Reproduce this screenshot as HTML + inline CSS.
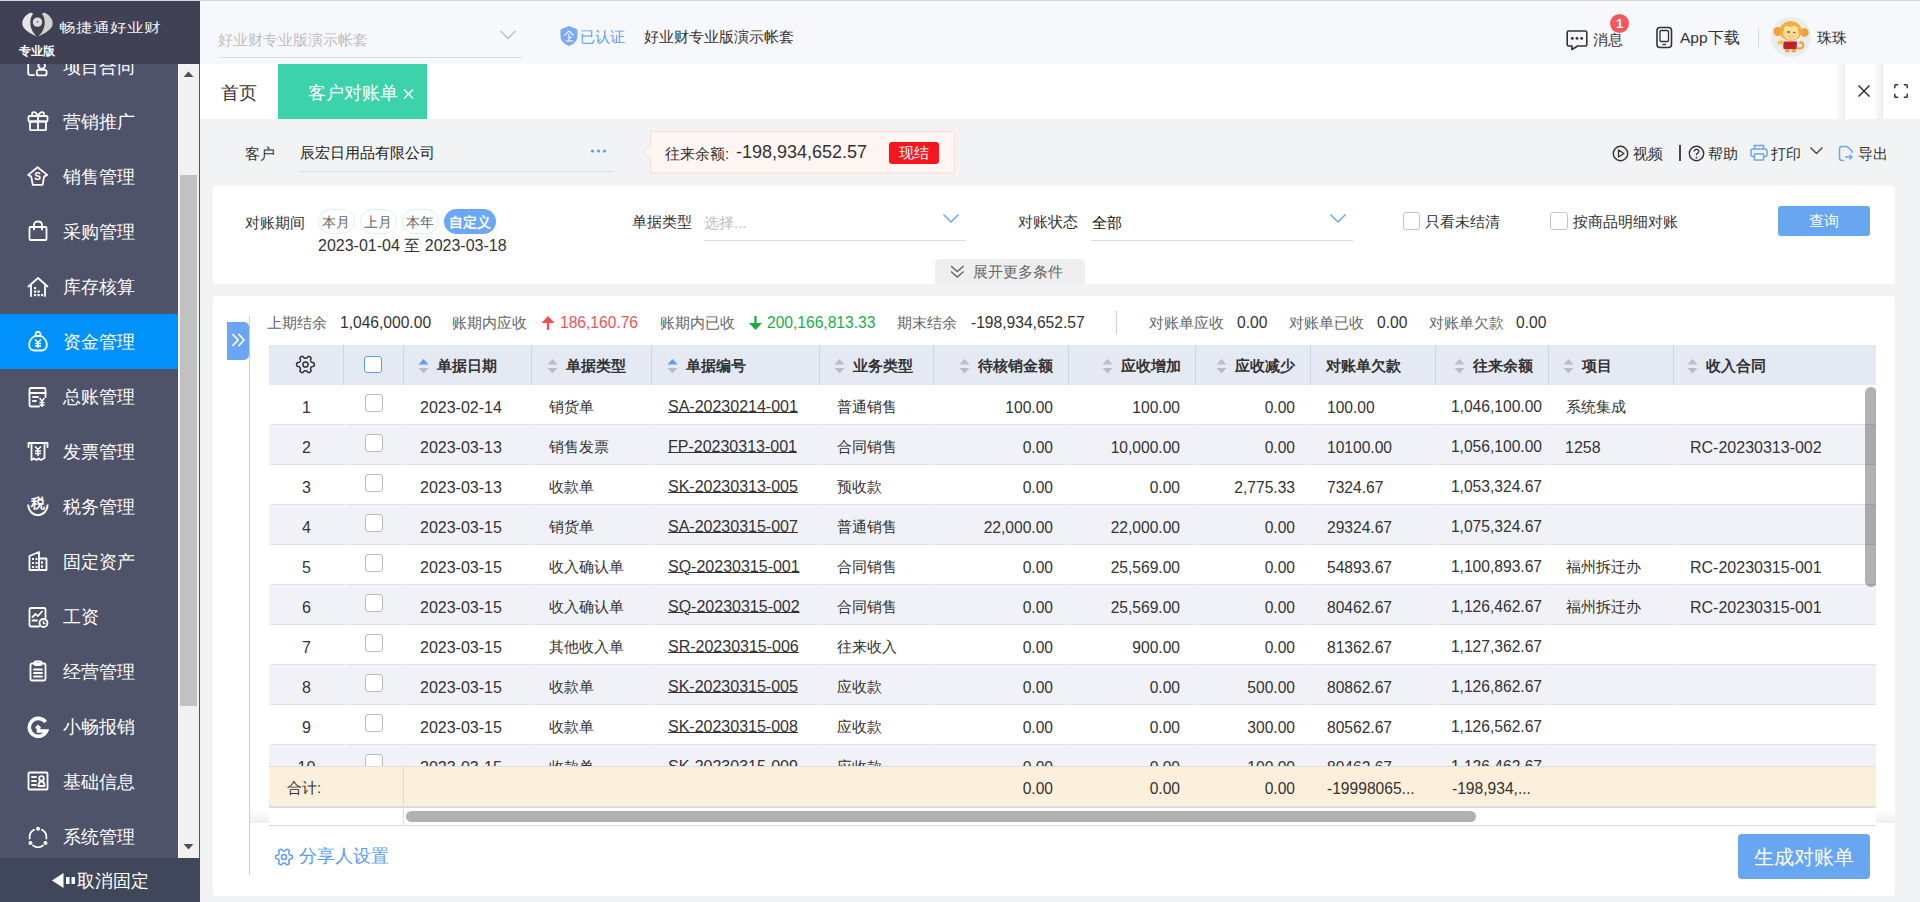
<!DOCTYPE html><html><head><meta charset="utf-8"><style>
*{margin:0;padding:0;box-sizing:border-box}
html,body{width:1920px;height:902px;overflow:hidden;background:#f2f3f5;font-family:"Liberation Sans",sans-serif;}
.t{position:absolute;white-space:nowrap}
.b{position:absolute;display:block}
.u{text-decoration:underline;text-underline-offset:2px}
</style></head><body><div class="b" style="left:200px;top:0px;width:1720px;height:64px;background:#f7f8fc"></div>
<div class="t " style="left:218px;top:30px;font-size:15px;line-height:20px;color:#bfbfbf;">好业财专业版演示帐套</div>
<div class="b" style="left:219px;top:57px;width:303px;height:1px;background:#dedede"></div>
<svg class="b" style="left:499px;top:29px;" width="18" height="12" viewBox="0 0 18 12"><path d="M1.5 2 L9 9.5 L16.5 2" fill="none" stroke="#bdbdbd" stroke-width="1.4"/></svg>
<svg class="b" style="left:559px;top:25px;" width="20" height="22" viewBox="0 0 20 22"><path d="M10 1 L18.5 4.5 V11 C18.5 16 14.5 19.5 10 21 C5.5 19.5 1.5 16 1.5 11 V4.5 Z" fill="#7aaaf6"/><path d="M10 6 L5.5 10.5 M10 6 L14.5 10.5 M10 9 V16 M6.5 16 H14 M10 12.5 H13" stroke="#fff" stroke-width="1.1" fill="none"/></svg>
<div class="t " style="left:580px;top:27px;font-size:15px;line-height:20px;color:#5d9bf4;">已认证</div>
<div class="t " style="left:644px;top:27px;font-size:15px;line-height:20px;color:#333;">好业财专业版演示帐套</div>
<svg class="b" style="left:1565px;top:29px;" width="24" height="23" viewBox="0 0 24 23"><path d="M3.6 2 H20.4 Q21.8 2 21.8 3.4 V15.6 Q21.8 17 20.4 17 H12.8 L6.8 20.5 L7 17 H3.6 Q2.2 17 2.2 15.6 V3.4 Q2.2 2 3.6 2 Z" fill="none" stroke="#333" stroke-width="1.6" stroke-linejoin="round"/><circle cx="7.3" cy="9.4" r="1.45" fill="#333"/><circle cx="12" cy="9.4" r="1.45" fill="#333"/><circle cx="16.7" cy="9.4" r="1.45" fill="#333"/></svg>
<div class="t " style="left:1593px;top:30px;font-size:15px;line-height:20px;color:#333;">消息</div>
<div class="b" style="left:1610px;top:14px;width:19px;height:19px;background:#f5575b;border-radius:50%"></div>
<div class="t " style="left:1610px;top:14px;font-size:13px;line-height:19px;color:#fff;width:19px;text-align:center;font-weight:bold">1</div>
<svg class="b" style="left:1655px;top:26px;" width="19" height="23" viewBox="0 0 19 23"><rect x="2" y="1.5" width="14.5" height="20" rx="3" fill="none" stroke="#333" stroke-width="1.6"/><rect x="5" y="4.5" width="8.5" height="11" rx="1" fill="none" stroke="#333" stroke-width="1.3"/><path d="M7.5 18.5 H11" stroke="#333" stroke-width="1.4"/></svg>
<div class="t " style="left:1680px;top:28px;font-size:15.5px;line-height:20px;color:#333;">App下载</div>
<div class="b" style="left:1758px;top:27px;width:1px;height:20px;background:#dddddd"></div>
<svg class="b" style="left:1771px;top:17px;" width="40" height="40" viewBox="0 0 40 40"><circle cx="20" cy="20" r="20" fill="#ebebeb"/><path d="M26 31 Q33 33 32 27 Q31 24 29 26" fill="none" stroke="#f3a53c" stroke-width="2.2" stroke-linecap="round"/><rect x="14" y="30" width="4.5" height="5.5" rx="2" fill="#f2a23a"/><rect x="20.5" y="30" width="4.5" height="5.5" rx="2" fill="#f2a23a"/><path d="M12 24.5 H26 L25.5 32 H12.5 Z" fill="#c31f2b"/><rect x="6.5" y="23.5" width="6.5" height="4" rx="2" fill="#f5c64a"/><circle cx="7" cy="14.5" r="4.6" fill="#f0a13a"/><circle cx="33.5" cy="15.5" r="4.2" fill="#f0a13a"/><ellipse cx="19.6" cy="14" rx="11" ry="10" fill="#f3ad40"/><ellipse cx="20" cy="16.5" rx="8" ry="6.8" fill="#fbd88e"/><ellipse cx="16.5" cy="11.5" rx="3.5" ry="2.5" fill="#fde3a0"/><ellipse cx="23.5" cy="11.5" rx="3.5" ry="2.5" fill="#fde3a0"/><circle cx="17.5" cy="15" r="1.1" fill="#5a3a6a"/><path d="M22 15.5 H24.5" stroke="#7a4a6a" stroke-width="0.9"/><path d="M18 19.5 Q20.5 22.5 23 19.5 Z" fill="#e08a2a"/><rect x="19.6" y="19.6" width="2" height="1.3" fill="#fff"/></svg>
<div class="t " style="left:1817px;top:28px;font-size:15px;line-height:20px;color:#333;">珠珠</div>
<div class="b" style="left:200px;top:64px;width:1720px;height:55px;background:#fff"></div>
<div class="t " style="left:221px;top:83px;font-size:18px;line-height:20px;color:#333;">首页</div>
<div class="b" style="left:278px;top:64px;width:149px;height:55px;background:#3cd3aa"></div>
<div class="t " style="left:308px;top:83px;font-size:18px;line-height:20px;color:#fff;">客户对账单</div>
<svg class="b" style="left:402px;top:88px;" width="13" height="12" viewBox="0 0 13 12"><path d="M2 1.5 L11 10.5 M11 1.5 L2 10.5" stroke="#fff" stroke-width="1.3"/></svg>
<div class="b" style="left:1835px;top:64px;width:10px;height:55px;background:linear-gradient(to right,rgba(0,0,0,0),rgba(0,0,0,0.07))"></div>
<div class="b" style="left:1845px;top:64px;width:38px;height:55px;background:#fff"></div>
<div class="b" style="left:1873px;top:64px;width:10px;height:55px;background:linear-gradient(to right,rgba(0,0,0,0),rgba(0,0,0,0.07))"></div>
<div class="b" style="left:1883px;top:64px;width:37px;height:55px;background:#fff"></div>
<svg class="b" style="left:1857px;top:84px;" width="14" height="14" viewBox="0 0 14 14"><path d="M1.5 1.5 L12.5 12.5 M12.5 1.5 L1.5 12.5" stroke="#333" stroke-width="1.5"/></svg>
<svg class="b" style="left:1893px;top:83px;" width="16" height="16" viewBox="0 0 16 16"><path d="M1.8 5.2 V2.6 Q1.8 1.8 2.6 1.8 H5.2 M10.8 1.8 H13.4 Q14.2 1.8 14.2 2.6 V5.2 M14.2 10.8 V13.4 Q14.2 14.2 13.4 14.2 H10.8 M5.2 14.2 H2.6 Q1.8 14.2 1.8 13.4 V10.8" fill="none" stroke="#333" stroke-width="1.5"/></svg>
<div class="t " style="left:245px;top:144px;font-size:15px;line-height:20px;color:#333;">客户</div>
<div class="t " style="left:300px;top:143px;font-size:15px;line-height:20px;color:#222;">辰宏日用品有限公司</div>
<svg class="b" style="left:590px;top:148px;" width="17" height="6" viewBox="0 0 17 6"><circle cx="2.5" cy="3" r="1.6" fill="#5d9bf4"/><circle cx="8.5" cy="3" r="1.6" fill="#5d9bf4"/><circle cx="14.5" cy="3" r="1.6" fill="#5d9bf4"/></svg>
<div class="b" style="left:300px;top:171px;width:313px;height:1px;background:#dcdcdc"></div>
<svg class="b" style="left:642px;top:130px;" width="314" height="45" viewBox="0 0 314 45"><path d="M10.5 1.5 H310.5 Q312.5 1.5 312.5 3.5 V41 Q312.5 43 310.5 43 H10.5 Q8.5 43 8.5 41 V28.7 L1.5 22 L8.5 15.3 V3.5 Q8.5 1.5 10.5 1.5 Z" fill="#fff5f2" stroke="#fbdcd2" stroke-width="1"/></svg>
<div class="t " style="left:665px;top:144px;font-size:15px;line-height:20px;color:#333;">往来余额:</div>
<div class="t " style="left:736px;top:142px;font-size:18px;line-height:20px;color:#333;">-198,934,652.57</div>
<div class="b" style="left:889px;top:142px;width:50px;height:22px;background:#f5161f;border-radius:3px"></div>
<div class="t " style="left:889px;top:143px;font-size:15px;line-height:20px;color:#fff;width:50px;text-align:center">现结</div>
<svg class="b" style="left:1612px;top:145px;" width="17" height="17" viewBox="0 0 17 17"><circle cx="8.5" cy="8.5" r="7.2" fill="none" stroke="#333" stroke-width="1.4"/><path d="M6.5 5 L12 8.5 L6.5 12 Z" fill="none" stroke="#333" stroke-width="1.3" stroke-linejoin="round"/></svg>
<div class="t " style="left:1633px;top:144px;font-size:15px;line-height:20px;color:#333;">视频</div>
<div class="b" style="left:1679px;top:145px;width:2px;height:16px;background:#444"></div>
<svg class="b" style="left:1688px;top:145px;" width="17" height="17" viewBox="0 0 17 17"><circle cx="8.5" cy="8.5" r="7.2" fill="none" stroke="#333" stroke-width="1.4"/><path d="M6.2 6.6 Q6.2 4.3 8.5 4.3 Q10.8 4.3 10.8 6.4 Q10.8 7.8 8.5 9 V10.3" fill="none" stroke="#333" stroke-width="1.3"/><circle cx="8.5" cy="12.6" r="0.9" fill="#333"/></svg>
<div class="t " style="left:1708px;top:144px;font-size:15px;line-height:20px;color:#333;">帮助</div>
<svg class="b" style="left:1750px;top:144px;" width="18" height="17" viewBox="0 0 18 17"><path d="M4.5 5 V1.5 H13.5 V5" fill="none" stroke="#6aa7f4" stroke-width="1.5"/><rect x="1" y="5" width="16" height="7.5" rx="2" fill="none" stroke="#6aa7f4" stroke-width="1.5"/><rect x="4.5" y="10" width="9" height="6" fill="#fff" stroke="#6aa7f4" stroke-width="1.5"/></svg>
<div class="t " style="left:1771px;top:144px;font-size:15px;line-height:20px;color:#333;">打印</div>
<svg class="b" style="left:1809px;top:146px;" width="15" height="10" viewBox="0 0 15 10"><path d="M1.5 1.5 L7.5 7.5 L13.5 1.5" fill="none" stroke="#444" stroke-width="1.4"/></svg>
<svg class="b" style="left:1838px;top:145px;" width="16" height="17" viewBox="0 0 16 17"><path d="M9 1.5 H4 Q1.5 1.5 1.5 4 V13 Q1.5 15.5 4 15.5 H6 M9 1.5 L14 6 V8" fill="none" stroke="#6aa7f4" stroke-width="1.5"/><path d="M7 12 H14 M11.5 9.5 L14 12 L11.5 14.5" fill="none" stroke="#6aa7f4" stroke-width="1.4"/></svg>
<div class="t " style="left:1858px;top:144px;font-size:15px;line-height:20px;color:#333;">导出</div>
<div class="b" style="left:213px;top:186px;width:1682px;height:98px;background:#fff;border-radius:3px"></div>
<div class="t " style="left:245px;top:213px;font-size:15px;line-height:20px;color:#333;">对账期间</div>
<div class="b" style="left:318px;top:209px;width:37px;height:25px;border:1px solid #d8f3ea;border-radius:13px"></div>
<div class="t " style="left:317px;top:212px;font-size:14px;line-height:20px;color:#666;width:37px;text-align:center">本月</div>
<div class="b" style="left:360px;top:209px;width:37px;height:25px;border:1px solid #d8f3ea;border-radius:13px"></div>
<div class="t " style="left:359px;top:212px;font-size:14px;line-height:20px;color:#666;width:37px;text-align:center">上月</div>
<div class="b" style="left:402px;top:209px;width:37px;height:25px;border:1px solid #d8f3ea;border-radius:13px"></div>
<div class="t " style="left:401px;top:212px;font-size:14px;line-height:20px;color:#666;width:37px;text-align:center">本年</div>
<div class="b" style="left:444px;top:209px;width:52px;height:25px;background:#6aa7f4;border-radius:13px"></div>
<div class="t " style="left:444px;top:212px;font-size:14px;line-height:20px;color:#fff;width:52px;text-align:center;font-weight:bold">自定义</div>
<div class="t " style="left:318px;top:236px;font-size:16px;line-height:20px;color:#333;">2023-01-04 至 2023-03-18</div>
<div class="t " style="left:632px;top:212px;font-size:15px;line-height:20px;color:#333;">单据类型</div>
<div class="t " style="left:704px;top:213px;font-size:15px;line-height:20px;color:#c0c0c0;">选择...</div>
<svg class="b" style="left:942px;top:213px;" width="18" height="11" viewBox="0 0 18 11"><path d="M1.5 1.5 L9 9 L16.5 1.5" fill="none" stroke="#6aa7f4" stroke-width="1.5"/></svg>
<div class="b" style="left:704px;top:240px;width:262px;height:1px;background:#dcdcdc"></div>
<div class="t " style="left:1018px;top:212px;font-size:15px;line-height:20px;color:#333;">对账状态</div>
<div class="t " style="left:1092px;top:213px;font-size:15px;line-height:20px;color:#111;">全部</div>
<svg class="b" style="left:1329px;top:213px;" width="18" height="11" viewBox="0 0 18 11"><path d="M1.5 1.5 L9 9 L16.5 1.5" fill="none" stroke="#6aa7f4" stroke-width="1.5"/></svg>
<div class="b" style="left:1091px;top:240px;width:262px;height:1px;background:#dcdcdc"></div>
<div class="b" style="left:1403px;top:212px;width:17px;height:18px;border:1px solid #c4c4c4;border-radius:3px;background:#fff"></div>
<div class="t " style="left:1425px;top:212px;font-size:15px;line-height:20px;color:#333;">只看未结清</div>
<div class="b" style="left:1550px;top:212px;width:18px;height:18px;border:1px solid #c4c4c4;border-radius:3px;background:#fff"></div>
<div class="t " style="left:1573px;top:212px;font-size:15px;line-height:20px;color:#333;">按商品明细对账</div>
<div class="b" style="left:1778px;top:206px;width:92px;height:30px;background:#68a6f2;border-radius:3px"></div>
<div class="t " style="left:1778px;top:211px;font-size:15px;line-height:20px;color:#fff;width:92px;text-align:center">查询</div>
<div class="b" style="left:935px;top:259px;width:150px;height:25px;background:#efefef;border-radius:5px 5px 0 0"></div>
<svg class="b" style="left:949px;top:264px;" width="17" height="15" viewBox="0 0 17 15"><path d="M2 2 L8.3 7.5 L14.6 2 M2 7.5 L8.3 13 L14.6 7.5" fill="none" stroke="#666" stroke-width="1.4"/></svg>
<div class="t " style="left:973px;top:262px;font-size:15px;line-height:20px;color:#666;">展开更多条件</div>
<div class="b" style="left:213px;top:296px;width:1682px;height:600px;background:#fff;border-radius:3px"></div>
<div class="b" style="left:249px;top:316px;width:1px;height:559px;background:#cfcfcf"></div>
<div class="b" style="left:227px;top:322px;width:22px;height:38px;background:#6aa6f4;border-radius:0 5px 5px 0"></div>
<svg class="b" style="left:231px;top:333px;" width="15" height="15" viewBox="0 0 15 15"><path d="M1.5 1 L7 7 L1.5 13 M7.5 1 L13 7 L7.5 13" fill="none" stroke="#fff" stroke-width="1.7"/></svg>
<div class="t " style="left:267px;top:313px;font-size:15px;line-height:20px;color:#666;">上期结余</div>
<div class="t " style="left:340px;top:313px;font-size:15.6px;line-height:20px;color:#333;">1,046,000.00</div>
<div class="t " style="left:452px;top:313px;font-size:15px;line-height:20px;color:#666;">账期内应收</div>
<svg class="b" style="left:540px;top:315px;" width="16" height="16" viewBox="0 0 16 16"><path d="M8 1 L14.5 8 H9.1 V15 H6.9 V8 H1.5 Z" fill="#fc4a4e"/></svg>
<div class="t " style="left:560px;top:313px;font-size:15.6px;line-height:20px;color:#f5525a;">186,160.76</div>
<div class="t " style="left:660px;top:313px;font-size:15px;line-height:20px;color:#666;">账期内已收</div>
<svg class="b" style="left:748px;top:315px;" width="15" height="16" viewBox="0 0 15 16"><path d="M7.5 15 L14 8 H8.6 V1 H6.4 V8 H1 Z" fill="#17ac3c"/></svg>
<div class="t " style="left:767px;top:313px;font-size:15.6px;line-height:20px;color:#16b04c;">200,166,813.33</div>
<div class="t " style="left:897px;top:313px;font-size:15px;line-height:20px;color:#666;">期末结余</div>
<div class="t " style="left:971px;top:313px;font-size:15.6px;line-height:20px;color:#333;">-198,934,652.57</div>
<div class="b" style="left:1116px;top:311px;width:1px;height:23px;background:#cfcfcf"></div>
<div class="t " style="left:1149px;top:313px;font-size:15px;line-height:20px;color:#666;">对账单应收</div>
<div class="t " style="left:1237px;top:313px;font-size:15.6px;line-height:20px;color:#333;">0.00</div>
<div class="t " style="left:1289px;top:313px;font-size:15px;line-height:20px;color:#666;">对账单已收</div>
<div class="t " style="left:1377px;top:313px;font-size:15.6px;line-height:20px;color:#333;">0.00</div>
<div class="t " style="left:1429px;top:313px;font-size:15px;line-height:20px;color:#666;">对账单欠款</div>
<div class="t " style="left:1516px;top:313px;font-size:15.6px;line-height:20px;color:#333;">0.00</div>
<div class="b" style="left:269px;top:345px;width:1607px;height:40px;background:#e5e9f4"></div>
<div class="b" style="left:343px;top:345px;width:1px;height:40px;background:#cfd3dc"></div>
<div class="b" style="left:403px;top:345px;width:1px;height:40px;background:#cfd3dc"></div>
<div class="b" style="left:531px;top:345px;width:1px;height:40px;background:#cfd3dc"></div>
<div class="b" style="left:651px;top:345px;width:1px;height:40px;background:#cfd3dc"></div>
<div class="b" style="left:819px;top:345px;width:1px;height:40px;background:#cfd3dc"></div>
<div class="b" style="left:933px;top:345px;width:1px;height:40px;background:#cfd3dc"></div>
<div class="b" style="left:1068px;top:345px;width:1px;height:40px;background:#cfd3dc"></div>
<div class="b" style="left:1195px;top:345px;width:1px;height:40px;background:#cfd3dc"></div>
<div class="b" style="left:1310px;top:345px;width:1px;height:40px;background:#cfd3dc"></div>
<div class="b" style="left:1435px;top:345px;width:1px;height:40px;background:#cfd3dc"></div>
<div class="b" style="left:1548px;top:345px;width:1px;height:40px;background:#cfd3dc"></div>
<div class="b" style="left:1673px;top:345px;width:1px;height:40px;background:#cfd3dc"></div>
<svg class="b" style="left:295px;top:354px;" width="21" height="21" viewBox="0 0 21 21"><path d="M19.45 10.50 L19.41 10.97 L19.28 11.42 L19.06 11.86 L18.71 12.25 L17.84 12.47 L16.97 12.60 L16.60 12.84 L16.32 13.09 L16.10 13.35 L15.91 13.62 L15.77 13.92 L15.66 14.25 L15.58 14.61 L15.56 15.05 L15.87 15.87 L16.12 16.74 L15.95 17.23 L15.69 17.64 L15.36 17.98 L14.98 18.25 L14.55 18.45 L14.09 18.56 L13.60 18.59 L13.09 18.48 L12.47 17.84 L11.91 17.16 L11.52 16.96 L11.17 16.84 L10.83 16.77 L10.50 16.75 L10.17 16.77 L9.83 16.84 L9.48 16.96 L9.09 17.16 L8.53 17.84 L7.91 18.48 L7.40 18.59 L6.91 18.56 L6.45 18.45 L6.03 18.25 L5.64 17.98 L5.31 17.64 L5.05 17.23 L4.88 16.74 L5.13 15.87 L5.44 15.05 L5.42 14.61 L5.34 14.25 L5.23 13.92 L5.09 13.62 L4.90 13.35 L4.68 13.09 L4.40 12.84 L4.03 12.60 L3.16 12.47 L2.29 12.25 L1.94 11.86 L1.72 11.42 L1.59 10.97 L1.55 10.50 L1.59 10.03 L1.72 9.58 L1.94 9.14 L2.29 8.75 L3.16 8.53 L4.03 8.40 L4.40 8.16 L4.68 7.91 L4.90 7.65 L5.09 7.38 L5.23 7.08 L5.34 6.75 L5.42 6.39 L5.44 5.95 L5.13 5.13 L4.88 4.26 L5.05 3.77 L5.31 3.36 L5.64 3.02 L6.02 2.75 L6.45 2.55 L6.91 2.44 L7.40 2.41 L7.91 2.52 L8.53 3.16 L9.09 3.84 L9.48 4.04 L9.83 4.16 L10.17 4.23 L10.50 4.25 L10.83 4.23 L11.17 4.16 L11.52 4.04 L11.91 3.84 L12.47 3.16 L13.09 2.52 L13.60 2.41 L14.09 2.44 L14.55 2.55 L14.98 2.75 L15.36 3.02 L15.69 3.36 L15.95 3.77 L16.12 4.26 L15.87 5.13 L15.56 5.95 L15.58 6.39 L15.66 6.75 L15.77 7.08 L15.91 7.38 L16.10 7.65 L16.32 7.91 L16.60 8.16 L16.97 8.40 L17.84 8.53 L18.71 8.75 L19.06 9.14 L19.28 9.58 L19.41 10.03 Z" fill="none" stroke="#333" stroke-width="1.5"/><circle cx="10.5" cy="10.5" r="2.6" fill="none" stroke="#333" stroke-width="1.5"/></svg>
<div class="b" style="left:364px;top:356px;width:18px;height:17px;border:1.5px solid #5b9cf5;border-radius:3px;background:#fff"></div>
<svg class="b" style="left:417.5px;top:358px;" width="11" height="17" viewBox="0 0 11 17"><path d="M5.5 1 L10.5 6.5 H0.5 Z" fill="#5b9cf5"/><path d="M5.5 15.5 L10.5 10 H0.5 Z" fill="#bdbdbd"/></svg>
<div class="t " style="left:437px;top:356px;font-size:15px;line-height:20px;color:#333;font-weight:bold">单据日期</div>
<svg class="b" style="left:546.5px;top:358px;" width="11" height="17" viewBox="0 0 11 17"><path d="M5.5 1 L10.5 6.5 H0.5 Z" fill="#bdbdbd"/><path d="M5.5 15.5 L10.5 10 H0.5 Z" fill="#bdbdbd"/></svg>
<div class="t " style="left:566px;top:356px;font-size:15px;line-height:20px;color:#333;font-weight:bold">单据类型</div>
<svg class="b" style="left:666.5px;top:358px;" width="11" height="17" viewBox="0 0 11 17"><path d="M5.5 1 L10.5 6.5 H0.5 Z" fill="#5b9cf5"/><path d="M5.5 15.5 L10.5 10 H0.5 Z" fill="#bdbdbd"/></svg>
<div class="t " style="left:686px;top:356px;font-size:15px;line-height:20px;color:#333;font-weight:bold">单据编号</div>
<svg class="b" style="left:833.5px;top:358px;" width="11" height="17" viewBox="0 0 11 17"><path d="M5.5 1 L10.5 6.5 H0.5 Z" fill="#bdbdbd"/><path d="M5.5 15.5 L10.5 10 H0.5 Z" fill="#bdbdbd"/></svg>
<div class="t " style="left:853px;top:356px;font-size:15px;line-height:20px;color:#333;font-weight:bold">业务类型</div>
<svg class="b" style="left:958.5px;top:358px;" width="11" height="17" viewBox="0 0 11 17"><path d="M5.5 1 L10.5 6.5 H0.5 Z" fill="#bdbdbd"/><path d="M5.5 15.5 L10.5 10 H0.5 Z" fill="#bdbdbd"/></svg>
<div class="t " style="left:978px;top:356px;font-size:15px;line-height:20px;color:#333;font-weight:bold">待核销金额</div>
<svg class="b" style="left:1101.5px;top:358px;" width="11" height="17" viewBox="0 0 11 17"><path d="M5.5 1 L10.5 6.5 H0.5 Z" fill="#bdbdbd"/><path d="M5.5 15.5 L10.5 10 H0.5 Z" fill="#bdbdbd"/></svg>
<div class="t " style="left:1121px;top:356px;font-size:15px;line-height:20px;color:#333;font-weight:bold">应收增加</div>
<svg class="b" style="left:1215.5px;top:358px;" width="11" height="17" viewBox="0 0 11 17"><path d="M5.5 1 L10.5 6.5 H0.5 Z" fill="#bdbdbd"/><path d="M5.5 15.5 L10.5 10 H0.5 Z" fill="#bdbdbd"/></svg>
<div class="t " style="left:1235px;top:356px;font-size:15px;line-height:20px;color:#333;font-weight:bold">应收减少</div>
<div class="t " style="left:1326px;top:356px;font-size:15px;line-height:20px;color:#333;font-weight:bold">对账单欠款</div>
<svg class="b" style="left:1453.5px;top:358px;" width="11" height="17" viewBox="0 0 11 17"><path d="M5.5 1 L10.5 6.5 H0.5 Z" fill="#bdbdbd"/><path d="M5.5 15.5 L10.5 10 H0.5 Z" fill="#bdbdbd"/></svg>
<div class="t " style="left:1473px;top:356px;font-size:15px;line-height:20px;color:#333;font-weight:bold">往来余额</div>
<svg class="b" style="left:1562.5px;top:358px;" width="11" height="17" viewBox="0 0 11 17"><path d="M5.5 1 L10.5 6.5 H0.5 Z" fill="#bdbdbd"/><path d="M5.5 15.5 L10.5 10 H0.5 Z" fill="#bdbdbd"/></svg>
<div class="t " style="left:1582px;top:356px;font-size:15px;line-height:20px;color:#333;font-weight:bold">项目</div>
<svg class="b" style="left:1686.5px;top:358px;" width="11" height="17" viewBox="0 0 11 17"><path d="M5.5 1 L10.5 6.5 H0.5 Z" fill="#bdbdbd"/><path d="M5.5 15.5 L10.5 10 H0.5 Z" fill="#bdbdbd"/></svg>
<div class="t " style="left:1706px;top:356px;font-size:15px;line-height:20px;color:#333;font-weight:bold">收入合同</div>
<div class="b" style="left:269px;top:385px;width:1607px;height:381px;overflow:hidden">
<div class="b" style="left:1px;top:39px;width:74px;height:1px;background:#e2e4ea"></div>
<div class="b" style="left:76px;top:39px;width:59px;height:1px;background:#e2e4ea"></div>
<div class="b" style="left:136px;top:39px;width:127px;height:1px;background:#e2e4ea"></div>
<div class="b" style="left:264px;top:39px;width:119px;height:1px;background:#e2e4ea"></div>
<div class="b" style="left:384px;top:39px;width:167px;height:1px;background:#e2e4ea"></div>
<div class="b" style="left:552px;top:39px;width:113px;height:1px;background:#e2e4ea"></div>
<div class="b" style="left:666px;top:39px;width:133px;height:1px;background:#e2e4ea"></div>
<div class="b" style="left:800px;top:39px;width:127px;height:1px;background:#e2e4ea"></div>
<div class="b" style="left:928px;top:39px;width:113px;height:1px;background:#e2e4ea"></div>
<div class="b" style="left:1042px;top:39px;width:125px;height:1px;background:#e2e4ea"></div>
<div class="b" style="left:1168px;top:39px;width:111px;height:1px;background:#e2e4ea"></div>
<div class="b" style="left:1280px;top:39px;width:125px;height:1px;background:#e2e4ea"></div>
<div class="b" style="left:1406px;top:39px;width:201px;height:1px;background:#e2e4ea"></div>
<div class="t" style="left:0px;top:13px;font-size:16px;line-height:20px;color:#333;width:75px;text-align:center">1</div>
<div class="b" style="left:96px;top:9px;width:18px;height:18px;border:1px solid #bcbcbc;border-radius:3px;background:#fff"></div>
<div class="t" style="left:151px;top:13px;font-size:16px;line-height:20px;color:#333;">2023-02-14</div>
<div class="t" style="left:280px;top:11.5px;font-size:15px;line-height:20px;color:#333;">销货单</div>
<div class="t" style="left:399px;top:12px;font-size:16px;line-height:20px;color:#333;text-decoration:underline;text-underline-offset:0px">SA-20230214-001</div>
<div class="t" style="left:568px;top:11.5px;font-size:15px;line-height:20px;color:#333;">普通销售</div>
<div class="t" style="left:484px;top:12.5px;font-size:15.6px;line-height:20px;color:#333;width:300px;text-align:right">100.00</div>
<div class="t" style="left:611px;top:12.5px;font-size:15.6px;line-height:20px;color:#333;width:300px;text-align:right">100.00</div>
<div class="t" style="left:726px;top:12.5px;font-size:15.6px;line-height:20px;color:#333;width:300px;text-align:right">0.00</div>
<div class="t" style="left:1058px;top:12.5px;font-size:15.6px;line-height:20px;color:#333;">100.00</div>
<div class="t" style="left:973px;top:11.5px;font-size:15.6px;line-height:20px;color:#333;width:300px;text-align:right">1,046,100.00</div>
<div class="t" style="left:1297px;top:11.5px;font-size:15px;line-height:20px;color:#333;">系统集成</div>
<div class="b" style="left:0px;top:40px;width:1607px;height:40px;background:#f0f2f8"></div>
<div class="b" style="left:1px;top:79px;width:74px;height:1px;background:#e2e4ea"></div>
<div class="b" style="left:76px;top:79px;width:59px;height:1px;background:#e2e4ea"></div>
<div class="b" style="left:136px;top:79px;width:127px;height:1px;background:#e2e4ea"></div>
<div class="b" style="left:264px;top:79px;width:119px;height:1px;background:#e2e4ea"></div>
<div class="b" style="left:384px;top:79px;width:167px;height:1px;background:#e2e4ea"></div>
<div class="b" style="left:552px;top:79px;width:113px;height:1px;background:#e2e4ea"></div>
<div class="b" style="left:666px;top:79px;width:133px;height:1px;background:#e2e4ea"></div>
<div class="b" style="left:800px;top:79px;width:127px;height:1px;background:#e2e4ea"></div>
<div class="b" style="left:928px;top:79px;width:113px;height:1px;background:#e2e4ea"></div>
<div class="b" style="left:1042px;top:79px;width:125px;height:1px;background:#e2e4ea"></div>
<div class="b" style="left:1168px;top:79px;width:111px;height:1px;background:#e2e4ea"></div>
<div class="b" style="left:1280px;top:79px;width:125px;height:1px;background:#e2e4ea"></div>
<div class="b" style="left:1406px;top:79px;width:201px;height:1px;background:#e2e4ea"></div>
<div class="t" style="left:0px;top:53px;font-size:16px;line-height:20px;color:#333;width:75px;text-align:center">2</div>
<div class="b" style="left:96px;top:49px;width:18px;height:18px;border:1px solid #bcbcbc;border-radius:3px;background:#fff"></div>
<div class="t" style="left:151px;top:53px;font-size:16px;line-height:20px;color:#333;">2023-03-13</div>
<div class="t" style="left:280px;top:51.5px;font-size:15px;line-height:20px;color:#333;">销售发票</div>
<div class="t" style="left:399px;top:52px;font-size:16px;line-height:20px;color:#333;text-decoration:underline;text-underline-offset:0px">FP-20230313-001</div>
<div class="t" style="left:568px;top:51.5px;font-size:15px;line-height:20px;color:#333;">合同销售</div>
<div class="t" style="left:484px;top:52.5px;font-size:15.6px;line-height:20px;color:#333;width:300px;text-align:right">0.00</div>
<div class="t" style="left:611px;top:52.5px;font-size:15.6px;line-height:20px;color:#333;width:300px;text-align:right">10,000.00</div>
<div class="t" style="left:726px;top:52.5px;font-size:15.6px;line-height:20px;color:#333;width:300px;text-align:right">0.00</div>
<div class="t" style="left:1058px;top:52.5px;font-size:15.6px;line-height:20px;color:#333;">10100.00</div>
<div class="t" style="left:973px;top:51.5px;font-size:15.6px;line-height:20px;color:#333;width:300px;text-align:right">1,056,100.00</div>
<div class="t" style="left:1296px;top:53px;font-size:16px;line-height:20px;color:#333;">1258</div>
<div class="t" style="left:1421px;top:53px;font-size:16px;line-height:20px;color:#333;">RC-20230313-002</div>
<div class="b" style="left:1px;top:119px;width:74px;height:1px;background:#e2e4ea"></div>
<div class="b" style="left:76px;top:119px;width:59px;height:1px;background:#e2e4ea"></div>
<div class="b" style="left:136px;top:119px;width:127px;height:1px;background:#e2e4ea"></div>
<div class="b" style="left:264px;top:119px;width:119px;height:1px;background:#e2e4ea"></div>
<div class="b" style="left:384px;top:119px;width:167px;height:1px;background:#e2e4ea"></div>
<div class="b" style="left:552px;top:119px;width:113px;height:1px;background:#e2e4ea"></div>
<div class="b" style="left:666px;top:119px;width:133px;height:1px;background:#e2e4ea"></div>
<div class="b" style="left:800px;top:119px;width:127px;height:1px;background:#e2e4ea"></div>
<div class="b" style="left:928px;top:119px;width:113px;height:1px;background:#e2e4ea"></div>
<div class="b" style="left:1042px;top:119px;width:125px;height:1px;background:#e2e4ea"></div>
<div class="b" style="left:1168px;top:119px;width:111px;height:1px;background:#e2e4ea"></div>
<div class="b" style="left:1280px;top:119px;width:125px;height:1px;background:#e2e4ea"></div>
<div class="b" style="left:1406px;top:119px;width:201px;height:1px;background:#e2e4ea"></div>
<div class="t" style="left:0px;top:93px;font-size:16px;line-height:20px;color:#333;width:75px;text-align:center">3</div>
<div class="b" style="left:96px;top:89px;width:18px;height:18px;border:1px solid #bcbcbc;border-radius:3px;background:#fff"></div>
<div class="t" style="left:151px;top:93px;font-size:16px;line-height:20px;color:#333;">2023-03-13</div>
<div class="t" style="left:280px;top:91.5px;font-size:15px;line-height:20px;color:#333;">收款单</div>
<div class="t" style="left:399px;top:92px;font-size:16px;line-height:20px;color:#333;text-decoration:underline;text-underline-offset:0px">SK-20230313-005</div>
<div class="t" style="left:568px;top:91.5px;font-size:15px;line-height:20px;color:#333;">预收款</div>
<div class="t" style="left:484px;top:92.5px;font-size:15.6px;line-height:20px;color:#333;width:300px;text-align:right">0.00</div>
<div class="t" style="left:611px;top:92.5px;font-size:15.6px;line-height:20px;color:#333;width:300px;text-align:right">0.00</div>
<div class="t" style="left:726px;top:92.5px;font-size:15.6px;line-height:20px;color:#333;width:300px;text-align:right">2,775.33</div>
<div class="t" style="left:1058px;top:92.5px;font-size:15.6px;line-height:20px;color:#333;">7324.67</div>
<div class="t" style="left:973px;top:91.5px;font-size:15.6px;line-height:20px;color:#333;width:300px;text-align:right">1,053,324.67</div>
<div class="b" style="left:0px;top:120px;width:1607px;height:40px;background:#f0f2f8"></div>
<div class="b" style="left:1px;top:159px;width:74px;height:1px;background:#e2e4ea"></div>
<div class="b" style="left:76px;top:159px;width:59px;height:1px;background:#e2e4ea"></div>
<div class="b" style="left:136px;top:159px;width:127px;height:1px;background:#e2e4ea"></div>
<div class="b" style="left:264px;top:159px;width:119px;height:1px;background:#e2e4ea"></div>
<div class="b" style="left:384px;top:159px;width:167px;height:1px;background:#e2e4ea"></div>
<div class="b" style="left:552px;top:159px;width:113px;height:1px;background:#e2e4ea"></div>
<div class="b" style="left:666px;top:159px;width:133px;height:1px;background:#e2e4ea"></div>
<div class="b" style="left:800px;top:159px;width:127px;height:1px;background:#e2e4ea"></div>
<div class="b" style="left:928px;top:159px;width:113px;height:1px;background:#e2e4ea"></div>
<div class="b" style="left:1042px;top:159px;width:125px;height:1px;background:#e2e4ea"></div>
<div class="b" style="left:1168px;top:159px;width:111px;height:1px;background:#e2e4ea"></div>
<div class="b" style="left:1280px;top:159px;width:125px;height:1px;background:#e2e4ea"></div>
<div class="b" style="left:1406px;top:159px;width:201px;height:1px;background:#e2e4ea"></div>
<div class="t" style="left:0px;top:133px;font-size:16px;line-height:20px;color:#333;width:75px;text-align:center">4</div>
<div class="b" style="left:96px;top:129px;width:18px;height:18px;border:1px solid #bcbcbc;border-radius:3px;background:#fff"></div>
<div class="t" style="left:151px;top:133px;font-size:16px;line-height:20px;color:#333;">2023-03-15</div>
<div class="t" style="left:280px;top:131.5px;font-size:15px;line-height:20px;color:#333;">销货单</div>
<div class="t" style="left:399px;top:132px;font-size:16px;line-height:20px;color:#333;text-decoration:underline;text-underline-offset:0px">SA-20230315-007</div>
<div class="t" style="left:568px;top:131.5px;font-size:15px;line-height:20px;color:#333;">普通销售</div>
<div class="t" style="left:484px;top:132.5px;font-size:15.6px;line-height:20px;color:#333;width:300px;text-align:right">22,000.00</div>
<div class="t" style="left:611px;top:132.5px;font-size:15.6px;line-height:20px;color:#333;width:300px;text-align:right">22,000.00</div>
<div class="t" style="left:726px;top:132.5px;font-size:15.6px;line-height:20px;color:#333;width:300px;text-align:right">0.00</div>
<div class="t" style="left:1058px;top:132.5px;font-size:15.6px;line-height:20px;color:#333;">29324.67</div>
<div class="t" style="left:973px;top:131.5px;font-size:15.6px;line-height:20px;color:#333;width:300px;text-align:right">1,075,324.67</div>
<div class="b" style="left:1px;top:199px;width:74px;height:1px;background:#e2e4ea"></div>
<div class="b" style="left:76px;top:199px;width:59px;height:1px;background:#e2e4ea"></div>
<div class="b" style="left:136px;top:199px;width:127px;height:1px;background:#e2e4ea"></div>
<div class="b" style="left:264px;top:199px;width:119px;height:1px;background:#e2e4ea"></div>
<div class="b" style="left:384px;top:199px;width:167px;height:1px;background:#e2e4ea"></div>
<div class="b" style="left:552px;top:199px;width:113px;height:1px;background:#e2e4ea"></div>
<div class="b" style="left:666px;top:199px;width:133px;height:1px;background:#e2e4ea"></div>
<div class="b" style="left:800px;top:199px;width:127px;height:1px;background:#e2e4ea"></div>
<div class="b" style="left:928px;top:199px;width:113px;height:1px;background:#e2e4ea"></div>
<div class="b" style="left:1042px;top:199px;width:125px;height:1px;background:#e2e4ea"></div>
<div class="b" style="left:1168px;top:199px;width:111px;height:1px;background:#e2e4ea"></div>
<div class="b" style="left:1280px;top:199px;width:125px;height:1px;background:#e2e4ea"></div>
<div class="b" style="left:1406px;top:199px;width:201px;height:1px;background:#e2e4ea"></div>
<div class="t" style="left:0px;top:173px;font-size:16px;line-height:20px;color:#333;width:75px;text-align:center">5</div>
<div class="b" style="left:96px;top:169px;width:18px;height:18px;border:1px solid #bcbcbc;border-radius:3px;background:#fff"></div>
<div class="t" style="left:151px;top:173px;font-size:16px;line-height:20px;color:#333;">2023-03-15</div>
<div class="t" style="left:280px;top:171.5px;font-size:15px;line-height:20px;color:#333;">收入确认单</div>
<div class="t" style="left:399px;top:172px;font-size:16px;line-height:20px;color:#333;text-decoration:underline;text-underline-offset:0px">SQ-20230315-001</div>
<div class="t" style="left:568px;top:171.5px;font-size:15px;line-height:20px;color:#333;">合同销售</div>
<div class="t" style="left:484px;top:172.5px;font-size:15.6px;line-height:20px;color:#333;width:300px;text-align:right">0.00</div>
<div class="t" style="left:611px;top:172.5px;font-size:15.6px;line-height:20px;color:#333;width:300px;text-align:right">25,569.00</div>
<div class="t" style="left:726px;top:172.5px;font-size:15.6px;line-height:20px;color:#333;width:300px;text-align:right">0.00</div>
<div class="t" style="left:1058px;top:172.5px;font-size:15.6px;line-height:20px;color:#333;">54893.67</div>
<div class="t" style="left:973px;top:171.5px;font-size:15.6px;line-height:20px;color:#333;width:300px;text-align:right">1,100,893.67</div>
<div class="t" style="left:1297px;top:171.5px;font-size:15px;line-height:20px;color:#333;">福州拆迁办</div>
<div class="t" style="left:1421px;top:173px;font-size:16px;line-height:20px;color:#333;">RC-20230315-001</div>
<div class="b" style="left:0px;top:200px;width:1607px;height:40px;background:#f0f2f8"></div>
<div class="b" style="left:1px;top:239px;width:74px;height:1px;background:#e2e4ea"></div>
<div class="b" style="left:76px;top:239px;width:59px;height:1px;background:#e2e4ea"></div>
<div class="b" style="left:136px;top:239px;width:127px;height:1px;background:#e2e4ea"></div>
<div class="b" style="left:264px;top:239px;width:119px;height:1px;background:#e2e4ea"></div>
<div class="b" style="left:384px;top:239px;width:167px;height:1px;background:#e2e4ea"></div>
<div class="b" style="left:552px;top:239px;width:113px;height:1px;background:#e2e4ea"></div>
<div class="b" style="left:666px;top:239px;width:133px;height:1px;background:#e2e4ea"></div>
<div class="b" style="left:800px;top:239px;width:127px;height:1px;background:#e2e4ea"></div>
<div class="b" style="left:928px;top:239px;width:113px;height:1px;background:#e2e4ea"></div>
<div class="b" style="left:1042px;top:239px;width:125px;height:1px;background:#e2e4ea"></div>
<div class="b" style="left:1168px;top:239px;width:111px;height:1px;background:#e2e4ea"></div>
<div class="b" style="left:1280px;top:239px;width:125px;height:1px;background:#e2e4ea"></div>
<div class="b" style="left:1406px;top:239px;width:201px;height:1px;background:#e2e4ea"></div>
<div class="t" style="left:0px;top:213px;font-size:16px;line-height:20px;color:#333;width:75px;text-align:center">6</div>
<div class="b" style="left:96px;top:209px;width:18px;height:18px;border:1px solid #bcbcbc;border-radius:3px;background:#fff"></div>
<div class="t" style="left:151px;top:213px;font-size:16px;line-height:20px;color:#333;">2023-03-15</div>
<div class="t" style="left:280px;top:211.5px;font-size:15px;line-height:20px;color:#333;">收入确认单</div>
<div class="t" style="left:399px;top:212px;font-size:16px;line-height:20px;color:#333;text-decoration:underline;text-underline-offset:0px">SQ-20230315-002</div>
<div class="t" style="left:568px;top:211.5px;font-size:15px;line-height:20px;color:#333;">合同销售</div>
<div class="t" style="left:484px;top:212.5px;font-size:15.6px;line-height:20px;color:#333;width:300px;text-align:right">0.00</div>
<div class="t" style="left:611px;top:212.5px;font-size:15.6px;line-height:20px;color:#333;width:300px;text-align:right">25,569.00</div>
<div class="t" style="left:726px;top:212.5px;font-size:15.6px;line-height:20px;color:#333;width:300px;text-align:right">0.00</div>
<div class="t" style="left:1058px;top:212.5px;font-size:15.6px;line-height:20px;color:#333;">80462.67</div>
<div class="t" style="left:973px;top:211.5px;font-size:15.6px;line-height:20px;color:#333;width:300px;text-align:right">1,126,462.67</div>
<div class="t" style="left:1297px;top:211.5px;font-size:15px;line-height:20px;color:#333;">福州拆迁办</div>
<div class="t" style="left:1421px;top:213px;font-size:16px;line-height:20px;color:#333;">RC-20230315-001</div>
<div class="b" style="left:1px;top:279px;width:74px;height:1px;background:#e2e4ea"></div>
<div class="b" style="left:76px;top:279px;width:59px;height:1px;background:#e2e4ea"></div>
<div class="b" style="left:136px;top:279px;width:127px;height:1px;background:#e2e4ea"></div>
<div class="b" style="left:264px;top:279px;width:119px;height:1px;background:#e2e4ea"></div>
<div class="b" style="left:384px;top:279px;width:167px;height:1px;background:#e2e4ea"></div>
<div class="b" style="left:552px;top:279px;width:113px;height:1px;background:#e2e4ea"></div>
<div class="b" style="left:666px;top:279px;width:133px;height:1px;background:#e2e4ea"></div>
<div class="b" style="left:800px;top:279px;width:127px;height:1px;background:#e2e4ea"></div>
<div class="b" style="left:928px;top:279px;width:113px;height:1px;background:#e2e4ea"></div>
<div class="b" style="left:1042px;top:279px;width:125px;height:1px;background:#e2e4ea"></div>
<div class="b" style="left:1168px;top:279px;width:111px;height:1px;background:#e2e4ea"></div>
<div class="b" style="left:1280px;top:279px;width:125px;height:1px;background:#e2e4ea"></div>
<div class="b" style="left:1406px;top:279px;width:201px;height:1px;background:#e2e4ea"></div>
<div class="t" style="left:0px;top:253px;font-size:16px;line-height:20px;color:#333;width:75px;text-align:center">7</div>
<div class="b" style="left:96px;top:249px;width:18px;height:18px;border:1px solid #bcbcbc;border-radius:3px;background:#fff"></div>
<div class="t" style="left:151px;top:253px;font-size:16px;line-height:20px;color:#333;">2023-03-15</div>
<div class="t" style="left:280px;top:251.5px;font-size:15px;line-height:20px;color:#333;">其他收入单</div>
<div class="t" style="left:399px;top:252px;font-size:16px;line-height:20px;color:#333;text-decoration:underline;text-underline-offset:0px">SR-20230315-006</div>
<div class="t" style="left:568px;top:251.5px;font-size:15px;line-height:20px;color:#333;">往来收入</div>
<div class="t" style="left:484px;top:252.5px;font-size:15.6px;line-height:20px;color:#333;width:300px;text-align:right">0.00</div>
<div class="t" style="left:611px;top:252.5px;font-size:15.6px;line-height:20px;color:#333;width:300px;text-align:right">900.00</div>
<div class="t" style="left:726px;top:252.5px;font-size:15.6px;line-height:20px;color:#333;width:300px;text-align:right">0.00</div>
<div class="t" style="left:1058px;top:252.5px;font-size:15.6px;line-height:20px;color:#333;">81362.67</div>
<div class="t" style="left:973px;top:251.5px;font-size:15.6px;line-height:20px;color:#333;width:300px;text-align:right">1,127,362.67</div>
<div class="b" style="left:0px;top:280px;width:1607px;height:40px;background:#f0f2f8"></div>
<div class="b" style="left:1px;top:319px;width:74px;height:1px;background:#e2e4ea"></div>
<div class="b" style="left:76px;top:319px;width:59px;height:1px;background:#e2e4ea"></div>
<div class="b" style="left:136px;top:319px;width:127px;height:1px;background:#e2e4ea"></div>
<div class="b" style="left:264px;top:319px;width:119px;height:1px;background:#e2e4ea"></div>
<div class="b" style="left:384px;top:319px;width:167px;height:1px;background:#e2e4ea"></div>
<div class="b" style="left:552px;top:319px;width:113px;height:1px;background:#e2e4ea"></div>
<div class="b" style="left:666px;top:319px;width:133px;height:1px;background:#e2e4ea"></div>
<div class="b" style="left:800px;top:319px;width:127px;height:1px;background:#e2e4ea"></div>
<div class="b" style="left:928px;top:319px;width:113px;height:1px;background:#e2e4ea"></div>
<div class="b" style="left:1042px;top:319px;width:125px;height:1px;background:#e2e4ea"></div>
<div class="b" style="left:1168px;top:319px;width:111px;height:1px;background:#e2e4ea"></div>
<div class="b" style="left:1280px;top:319px;width:125px;height:1px;background:#e2e4ea"></div>
<div class="b" style="left:1406px;top:319px;width:201px;height:1px;background:#e2e4ea"></div>
<div class="t" style="left:0px;top:293px;font-size:16px;line-height:20px;color:#333;width:75px;text-align:center">8</div>
<div class="b" style="left:96px;top:289px;width:18px;height:18px;border:1px solid #bcbcbc;border-radius:3px;background:#fff"></div>
<div class="t" style="left:151px;top:293px;font-size:16px;line-height:20px;color:#333;">2023-03-15</div>
<div class="t" style="left:280px;top:291.5px;font-size:15px;line-height:20px;color:#333;">收款单</div>
<div class="t" style="left:399px;top:292px;font-size:16px;line-height:20px;color:#333;text-decoration:underline;text-underline-offset:0px">SK-20230315-005</div>
<div class="t" style="left:568px;top:291.5px;font-size:15px;line-height:20px;color:#333;">应收款</div>
<div class="t" style="left:484px;top:292.5px;font-size:15.6px;line-height:20px;color:#333;width:300px;text-align:right">0.00</div>
<div class="t" style="left:611px;top:292.5px;font-size:15.6px;line-height:20px;color:#333;width:300px;text-align:right">0.00</div>
<div class="t" style="left:726px;top:292.5px;font-size:15.6px;line-height:20px;color:#333;width:300px;text-align:right">500.00</div>
<div class="t" style="left:1058px;top:292.5px;font-size:15.6px;line-height:20px;color:#333;">80862.67</div>
<div class="t" style="left:973px;top:291.5px;font-size:15.6px;line-height:20px;color:#333;width:300px;text-align:right">1,126,862.67</div>
<div class="b" style="left:1px;top:359px;width:74px;height:1px;background:#e2e4ea"></div>
<div class="b" style="left:76px;top:359px;width:59px;height:1px;background:#e2e4ea"></div>
<div class="b" style="left:136px;top:359px;width:127px;height:1px;background:#e2e4ea"></div>
<div class="b" style="left:264px;top:359px;width:119px;height:1px;background:#e2e4ea"></div>
<div class="b" style="left:384px;top:359px;width:167px;height:1px;background:#e2e4ea"></div>
<div class="b" style="left:552px;top:359px;width:113px;height:1px;background:#e2e4ea"></div>
<div class="b" style="left:666px;top:359px;width:133px;height:1px;background:#e2e4ea"></div>
<div class="b" style="left:800px;top:359px;width:127px;height:1px;background:#e2e4ea"></div>
<div class="b" style="left:928px;top:359px;width:113px;height:1px;background:#e2e4ea"></div>
<div class="b" style="left:1042px;top:359px;width:125px;height:1px;background:#e2e4ea"></div>
<div class="b" style="left:1168px;top:359px;width:111px;height:1px;background:#e2e4ea"></div>
<div class="b" style="left:1280px;top:359px;width:125px;height:1px;background:#e2e4ea"></div>
<div class="b" style="left:1406px;top:359px;width:201px;height:1px;background:#e2e4ea"></div>
<div class="t" style="left:0px;top:333px;font-size:16px;line-height:20px;color:#333;width:75px;text-align:center">9</div>
<div class="b" style="left:96px;top:329px;width:18px;height:18px;border:1px solid #bcbcbc;border-radius:3px;background:#fff"></div>
<div class="t" style="left:151px;top:333px;font-size:16px;line-height:20px;color:#333;">2023-03-15</div>
<div class="t" style="left:280px;top:331.5px;font-size:15px;line-height:20px;color:#333;">收款单</div>
<div class="t" style="left:399px;top:332px;font-size:16px;line-height:20px;color:#333;text-decoration:underline;text-underline-offset:0px">SK-20230315-008</div>
<div class="t" style="left:568px;top:331.5px;font-size:15px;line-height:20px;color:#333;">应收款</div>
<div class="t" style="left:484px;top:332.5px;font-size:15.6px;line-height:20px;color:#333;width:300px;text-align:right">0.00</div>
<div class="t" style="left:611px;top:332.5px;font-size:15.6px;line-height:20px;color:#333;width:300px;text-align:right">0.00</div>
<div class="t" style="left:726px;top:332.5px;font-size:15.6px;line-height:20px;color:#333;width:300px;text-align:right">300.00</div>
<div class="t" style="left:1058px;top:332.5px;font-size:15.6px;line-height:20px;color:#333;">80562.67</div>
<div class="t" style="left:973px;top:331.5px;font-size:15.6px;line-height:20px;color:#333;width:300px;text-align:right">1,126,562.67</div>
<div class="b" style="left:0px;top:360px;width:1607px;height:40px;background:#f0f2f8"></div>
<div class="b" style="left:1px;top:399px;width:74px;height:1px;background:#e2e4ea"></div>
<div class="b" style="left:76px;top:399px;width:59px;height:1px;background:#e2e4ea"></div>
<div class="b" style="left:136px;top:399px;width:127px;height:1px;background:#e2e4ea"></div>
<div class="b" style="left:264px;top:399px;width:119px;height:1px;background:#e2e4ea"></div>
<div class="b" style="left:384px;top:399px;width:167px;height:1px;background:#e2e4ea"></div>
<div class="b" style="left:552px;top:399px;width:113px;height:1px;background:#e2e4ea"></div>
<div class="b" style="left:666px;top:399px;width:133px;height:1px;background:#e2e4ea"></div>
<div class="b" style="left:800px;top:399px;width:127px;height:1px;background:#e2e4ea"></div>
<div class="b" style="left:928px;top:399px;width:113px;height:1px;background:#e2e4ea"></div>
<div class="b" style="left:1042px;top:399px;width:125px;height:1px;background:#e2e4ea"></div>
<div class="b" style="left:1168px;top:399px;width:111px;height:1px;background:#e2e4ea"></div>
<div class="b" style="left:1280px;top:399px;width:125px;height:1px;background:#e2e4ea"></div>
<div class="b" style="left:1406px;top:399px;width:201px;height:1px;background:#e2e4ea"></div>
<div class="t" style="left:0px;top:373px;font-size:16px;line-height:20px;color:#333;width:75px;text-align:center">10</div>
<div class="b" style="left:96px;top:369px;width:18px;height:18px;border:1px solid #bcbcbc;border-radius:3px;background:#fff"></div>
<div class="t" style="left:151px;top:373px;font-size:16px;line-height:20px;color:#333;">2023-03-15</div>
<div class="t" style="left:280px;top:371.5px;font-size:15px;line-height:20px;color:#333;">收款单</div>
<div class="t" style="left:399px;top:372px;font-size:16px;line-height:20px;color:#333;text-decoration:underline;text-underline-offset:0px">SK-20230315-009</div>
<div class="t" style="left:568px;top:371.5px;font-size:15px;line-height:20px;color:#333;">应收款</div>
<div class="t" style="left:484px;top:372.5px;font-size:15.6px;line-height:20px;color:#333;width:300px;text-align:right">0.00</div>
<div class="t" style="left:611px;top:372.5px;font-size:15.6px;line-height:20px;color:#333;width:300px;text-align:right">0.00</div>
<div class="t" style="left:726px;top:372.5px;font-size:15.6px;line-height:20px;color:#333;width:300px;text-align:right">100.00</div>
<div class="t" style="left:1058px;top:372.5px;font-size:15.6px;line-height:20px;color:#333;">80462.67</div>
<div class="t" style="left:973px;top:371.5px;font-size:15.6px;line-height:20px;color:#333;width:300px;text-align:right">1,126,462.67</div>
<div class="b" style="left:1596px;top:2px;width:12px;height:200px;background:rgba(0,0,0,0.3);border-radius:6px"></div>
</div>
<div class="b" style="left:269px;top:766px;width:1607px;height:40px;background:#fcefdb"></div>
<div class="b" style="left:403px;top:766px;width:1px;height:40px;background:#e0dcd4"></div>
<div class="b" style="left:269px;top:806px;width:1607px;height:2px;background:#dcdcdc"></div>
<div class="b" style="left:269px;top:766px;width:1607px;height:1px;background:#dedede"></div>
<div class="t " style="left:287px;top:778px;font-size:15px;line-height:20px;color:#333;">合计:</div>
<div class="t " style="left:753px;top:779px;font-size:15.6px;line-height:20px;color:#333;width:300px;text-align:right">0.00</div>
<div class="t " style="left:880px;top:779px;font-size:15.6px;line-height:20px;color:#333;width:300px;text-align:right">0.00</div>
<div class="t " style="left:995px;top:779px;font-size:15.6px;line-height:20px;color:#333;width:300px;text-align:right">0.00</div>
<div class="t " style="left:1327px;top:779px;font-size:15.6px;line-height:20px;color:#333;">-19998065...</div>
<div class="t " style="left:1452px;top:779px;font-size:15.6px;line-height:20px;color:#333;">-198,934,...</div>
<div class="b" style="left:269px;top:808px;width:1607px;height:17px;background:#fff"></div>
<div class="b" style="left:403px;top:808px;width:1px;height:17px;background:#e0e0e0"></div>
<div class="b" style="left:406px;top:811px;width:1070px;height:11px;background:#b1b1b1;border-radius:6px"></div>
<div class="b" style="left:269px;top:825px;width:1607px;height:1px;background:#dddddd"></div>
<div class="b" style="left:250px;top:811px;width:19px;height:12px;background:linear-gradient(rgba(0,0,0,0),rgba(0,0,0,0.07))"></div>
<div class="b" style="left:1876px;top:811px;width:19px;height:12px;background:linear-gradient(rgba(0,0,0,0),rgba(0,0,0,0.07))"></div>
<svg class="b" style="left:274px;top:847px;" width="20" height="20" viewBox="0 0 20 20"><path d="M18.50 10.00 L18.46 10.44 L18.34 10.88 L18.12 11.29 L17.79 11.66 L16.95 11.86 L16.12 11.99 L15.77 12.21 L15.50 12.45 L15.28 12.69 L15.11 12.95 L14.97 13.23 L14.87 13.54 L14.80 13.89 L14.78 14.30 L15.09 15.09 L15.33 15.92 L15.18 16.39 L14.93 16.78 L14.61 17.10 L14.25 17.36 L13.85 17.55 L13.41 17.66 L12.95 17.68 L12.46 17.58 L11.86 16.95 L11.34 16.29 L10.97 16.10 L10.63 15.99 L10.31 15.92 L10.00 15.90 L9.69 15.92 L9.37 15.99 L9.03 16.10 L8.66 16.29 L8.14 16.95 L7.54 17.58 L7.05 17.68 L6.59 17.66 L6.15 17.55 L5.75 17.36 L5.39 17.10 L5.07 16.78 L4.82 16.39 L4.67 15.92 L4.91 15.09 L5.22 14.30 L5.20 13.89 L5.13 13.54 L5.03 13.23 L4.89 12.95 L4.72 12.69 L4.50 12.45 L4.23 12.21 L3.88 11.99 L3.05 11.86 L2.21 11.66 L1.88 11.29 L1.66 10.88 L1.54 10.44 L1.50 10.00 L1.54 9.56 L1.66 9.12 L1.88 8.71 L2.21 8.34 L3.05 8.14 L3.88 8.01 L4.23 7.79 L4.50 7.55 L4.72 7.31 L4.89 7.05 L5.03 6.77 L5.13 6.46 L5.20 6.11 L5.22 5.70 L4.91 4.91 L4.67 4.08 L4.82 3.61 L5.07 3.22 L5.39 2.90 L5.75 2.64 L6.15 2.45 L6.59 2.34 L7.05 2.32 L7.54 2.42 L8.14 3.05 L8.66 3.71 L9.03 3.90 L9.37 4.01 L9.69 4.08 L10.00 4.10 L10.31 4.08 L10.63 4.01 L10.97 3.90 L11.34 3.71 L11.86 3.05 L12.46 2.42 L12.95 2.32 L13.41 2.34 L13.85 2.45 L14.25 2.64 L14.61 2.90 L14.93 3.22 L15.18 3.61 L15.33 4.08 L15.09 4.91 L14.78 5.70 L14.80 6.11 L14.87 6.46 L14.97 6.77 L15.11 7.05 L15.28 7.31 L15.50 7.55 L15.77 7.79 L16.12 8.01 L16.95 8.14 L17.79 8.34 L18.12 8.71 L18.34 9.12 L18.46 9.56 Z" fill="none" stroke="#5b9cf5" stroke-width="1.5"/><circle cx="10" cy="10" r="2.5" fill="none" stroke="#5b9cf5" stroke-width="1.5"/></svg>
<div class="t " style="left:299px;top:846px;font-size:17.5px;line-height:20px;color:#5b9cf5;">分享人设置</div>
<div class="b" style="left:1738px;top:834px;width:132px;height:45px;background:#68a6f2;border-radius:4px"></div>
<div class="t " style="left:1738px;top:846px;font-size:20px;line-height:22px;color:#fff;width:132px;text-align:center">生成对账单</div>
<div class="b" style="left:0px;top:64px;width:200px;height:838px;background:#4f5369"></div>
<div class="b" style="left:0px;top:314px;width:178px;height:55px;background:#0191fa"></div>
<svg class="b" style="left:27px;top:56px;" width="22" height="22" viewBox="0 0 22 22"><path d="M7 4 H3.5 Q1.2 4 1.2 6.5 V16.8 Q1.2 19.2 3.5 19.2 H7" stroke="#fff" stroke-width="1.8" fill="none" stroke-linejoin="round" stroke-linecap="round"/><circle cx="14.7" cy="9.5" r="3.3" stroke="#fff" stroke-width="1.8" fill="none" stroke-linejoin="round" stroke-linecap="round"/><rect x="9.8" y="13.8" width="9.8" height="5.6" rx="2" stroke="#fff" stroke-width="1.8" fill="none" stroke-linejoin="round" stroke-linecap="round"/></svg>
<div class="t " style="left:63px;top:57px;font-size:17.5px;line-height:20px;color:#fff;font-weight:500">项目合同</div>
<svg class="b" style="left:27px;top:110px;" width="22" height="22" viewBox="0 0 22 22"><rect x="1.5" y="6" width="19" height="5.5" rx="1" stroke="#fff" stroke-width="1.8" fill="none" stroke-linejoin="round" stroke-linecap="round"/><rect x="3" y="11.5" width="16" height="8.7" rx="1" stroke="#fff" stroke-width="1.8" fill="none" stroke-linejoin="round" stroke-linecap="round"/><path d="M11 6 V20.2 M11 6 C8.5 0.5 3.5 1 5.5 5.8 M11 6 C13.5 0.5 18.5 1 16.5 5.8" stroke="#fff" stroke-width="1.8" fill="none" stroke-linejoin="round" stroke-linecap="round"/></svg>
<div class="t " style="left:63px;top:112px;font-size:17.5px;line-height:20px;color:#fff;font-weight:500">营销推广</div>
<svg class="b" style="left:27px;top:166px;" width="22" height="22" viewBox="0 0 22 22"><path d="M10.6 1.2 L1.2 8.9 L4.2 10.6 L5.8 18.9 H15.6 L17.1 10.6 L20.2 8.9 Z" stroke="#fff" stroke-width="1.8" fill="none" stroke-linejoin="round" stroke-linecap="round"/><text x="10.6" y="13.6" font-size="10" font-weight="bold" fill="#fff" text-anchor="middle" font-family="Liberation Sans">S</text></svg>
<div class="t " style="left:63px;top:167px;font-size:17.5px;line-height:20px;color:#fff;font-weight:500">销售管理</div>
<svg class="b" style="left:27px;top:220px;" width="22" height="22" viewBox="0 0 22 22"><rect x="2.5" y="7" width="17" height="13" rx="1" stroke="#fff" stroke-width="1.8" fill="none" stroke-linejoin="round" stroke-linecap="round"/><path d="M7 9.5 V5 Q7 1.5 11 1.5 Q15 1.5 15 5 V9.5" stroke="#fff" stroke-width="1.8" fill="none" stroke-linejoin="round" stroke-linecap="round"/></svg>
<div class="t " style="left:63px;top:222px;font-size:17.5px;line-height:20px;color:#fff;font-weight:500">采购管理</div>
<svg class="b" style="left:27px;top:276px;" width="22" height="22" viewBox="0 0 22 22"><path d="M1.5 10.5 L11 2 L20.5 10.5 M4 8.5 V20" stroke="#fff" stroke-width="1.8" fill="none" stroke-linejoin="round" stroke-linecap="round"/><path d="M18 8.5 V20" stroke="#fff" stroke-width="1.8" fill="none" stroke-linejoin="round" stroke-linecap="round"/><rect x="7" y="11" width="2.2" height="2.2" fill="#fff"/><rect x="7" y="14.5" width="2.2" height="2.2" fill="#fff"/><rect x="10.5" y="14.5" width="2.2" height="2.2" fill="#fff"/><rect x="7" y="18" width="2.2" height="2.2" fill="#fff"/><rect x="10.5" y="18" width="2.2" height="2.2" fill="#fff"/><rect x="14" y="18" width="2.2" height="2.2" fill="#fff"/></svg>
<div class="t " style="left:63px;top:277px;font-size:17.5px;line-height:20px;color:#fff;font-weight:500">库存核算</div>
<svg class="b" style="left:27px;top:330px;" width="22" height="22" viewBox="0 0 22 22"><path d="M8 6 H14 L12.5 2 H9.5 Z M8 6 C3 8 1.5 13 2.5 17 Q3.5 20.5 8 20.5 H14 Q18.5 20.5 19.5 17 C20.5 13 19 8 14 6" stroke="#fff" stroke-width="1.8" fill="none" stroke-linejoin="round" stroke-linecap="round"/><path d="M8 9.5 L11 12.5 L14 9.5 M11 12.5 V18 M8 13.5 H14 M8 16 H14" stroke="#fff" stroke-width="1.5" fill="none"/></svg>
<div class="t " style="left:63px;top:332px;font-size:17.5px;line-height:20px;color:#fff;font-weight:500">资金管理</div>
<svg class="b" style="left:27px;top:386px;" width="22" height="22" viewBox="0 0 22 22"><path d="M12 20.5 H4 Q2.5 20.5 2.5 19 V3.5 Q2.5 2 4 2 H17 Q18.5 2 18.5 3.5 V11" stroke="#fff" stroke-width="1.8" fill="none" stroke-linejoin="round" stroke-linecap="round"/><path d="M2.5 7 H18.5 M6 11 H11 M6 15 H9" stroke="#fff" stroke-width="1.8" fill="none" stroke-linejoin="round" stroke-linecap="round"/><path d="M12.5 12 L15 15 L17.5 12 M15 15 V21 M12.5 16.5 H17.5 M12.5 19 H17.5" stroke="#fff" stroke-width="1.5" fill="none"/></svg>
<div class="t " style="left:63px;top:387px;font-size:17.5px;line-height:20px;color:#fff;font-weight:500">总账管理</div>
<svg class="b" style="left:27px;top:440px;" width="22" height="22" viewBox="0 0 22 22"><path d="M1.5 7 V3 H20.5 V7 M4.5 3 V20 L7 18.5 L9.5 20 L11.5 18.5 L14 20 L17.5 18 V3" stroke="#fff" stroke-width="1.8" fill="none" stroke-linejoin="round" stroke-linecap="round"/><path d="M8 6.5 L11 9.5 L14 6.5 M11 9.5 V16 M8 11 H14 M8 13.5 H14" stroke="#fff" stroke-width="1.5" fill="none"/></svg>
<div class="t " style="left:63px;top:442px;font-size:17.5px;line-height:20px;color:#fff;font-weight:500">发票管理</div>
<svg class="b" style="left:27px;top:496px;" width="22" height="22" viewBox="0 0 22 22"><path d="M1.2 8.5 A9.7 10.6 0 0 0 20.6 8.5" stroke="#fff" stroke-width="1.9" fill="none"/><text x="10.7" y="11.8" font-size="14" font-weight="bold" fill="#fff" text-anchor="middle">税</text></svg>
<div class="t " style="left:63px;top:497px;font-size:17.5px;line-height:20px;color:#fff;font-weight:500">税务管理</div>
<svg class="b" style="left:27px;top:550px;" width="22" height="22" viewBox="0 0 22 22"><path d="M2.5 20 V6 L12 2 V20 M12 8.5 H19 Q19.5 8.5 19.5 9 V20 H2.5" stroke="#fff" stroke-width="1.8" fill="none" stroke-linejoin="round" stroke-linecap="round"/><rect x="5" y="8" width="2" height="2" fill="#fff"/><rect x="8.5" y="8" width="2" height="2" fill="#fff"/><rect x="5" y="12" width="2" height="2" fill="#fff"/><rect x="8.5" y="12" width="2" height="2" fill="#fff"/><rect x="5" y="16" width="2" height="2" fill="#fff"/><rect x="8.5" y="16" width="2" height="2" fill="#fff"/><path d="M15 12 V13 M15 16 V17" stroke="#fff" stroke-width="1.8" fill="none" stroke-linejoin="round" stroke-linecap="round"/></svg>
<div class="t " style="left:63px;top:552px;font-size:17.5px;line-height:20px;color:#fff;font-weight:500">固定资产</div>
<svg class="b" style="left:27px;top:606px;" width="22" height="22" viewBox="0 0 22 22"><path d="M12 20.5 H4 Q2.5 20.5 2.5 19 V3.5 Q2.5 2 4 2 H17 Q18.5 2 18.5 3.5 V12" stroke="#fff" stroke-width="1.8" fill="none" stroke-linejoin="round" stroke-linecap="round"/><path d="M5.5 11 L8.5 8 L11 10 L15 5.5 M5.5 14.5 H10" stroke="#fff" stroke-width="1.8" fill="none" stroke-linejoin="round" stroke-linecap="round"/><circle cx="16.5" cy="17" r="4" stroke="#fff" stroke-width="1.8" fill="none" stroke-linejoin="round" stroke-linecap="round"/><path d="M16.5 15 V17.5 H18.5" stroke="#fff" stroke-width="1.3" fill="none"/></svg>
<div class="t " style="left:63px;top:607px;font-size:17.5px;line-height:20px;color:#fff;font-weight:500">工资</div>
<svg class="b" style="left:27px;top:660px;" width="22" height="22" viewBox="0 0 22 22"><rect x="3.5" y="3.5" width="15" height="17" rx="1.5" stroke="#fff" stroke-width="1.8" fill="none" stroke-linejoin="round" stroke-linecap="round"/><rect x="7.5" y="1.5" width="7" height="3.5" rx="1" stroke="#fff" stroke-width="1.8" fill="none" stroke-linejoin="round" stroke-linecap="round"/><path d="M7 9.5 H15 M7 13 H15 M7 16.5 H15" stroke="#fff" stroke-width="1.8" fill="none" stroke-linejoin="round" stroke-linecap="round"/></svg>
<div class="t " style="left:63px;top:662px;font-size:17.5px;line-height:20px;color:#fff;font-weight:500">经营管理</div>
<svg class="b" style="left:27px;top:716px;" width="22" height="22" viewBox="0 0 22 22"><path d="M18.5 6 A9 9 0 1 0 19.5 15 H11.5 V11" stroke="#fff" stroke-width="3.6" fill="none"/><path d="M8 11.5 L11 8.5 L14 11.5 L11 14.5 Z" fill="#fff"/></svg>
<div class="t " style="left:63px;top:717px;font-size:17.5px;line-height:20px;color:#fff;font-weight:500">小畅报销</div>
<svg class="b" style="left:27px;top:770px;" width="22" height="22" viewBox="0 0 22 22"><rect x="1.5" y="2.5" width="19" height="17" rx="1" stroke="#fff" stroke-width="1.8" fill="none" stroke-linejoin="round" stroke-linecap="round"/><path d="M5 7 H9 M5 11 H9 M5 15 H9" stroke="#fff" stroke-width="1.8" fill="none" stroke-linejoin="round" stroke-linecap="round"/><circle cx="14.5" cy="8.5" r="2.3" stroke="#fff" stroke-width="1.8" fill="none" stroke-linejoin="round" stroke-linecap="round"/><path d="M11.5 16 Q11.5 11.5 14.5 11.5 Q17.5 11.5 17.5 16 Z" stroke="#fff" stroke-width="1.8" fill="none" stroke-linejoin="round" stroke-linecap="round"/></svg>
<div class="t " style="left:63px;top:772px;font-size:17.5px;line-height:20px;color:#fff;font-weight:500">基础信息</div>
<svg class="b" style="left:27px;top:826px;" width="22" height="22" viewBox="0 0 22 22"><path d="M7 3.8 A8.5 8.5 0 0 0 2.7 12.5 M19.3 12.5 A8.5 8.5 0 0 0 15 3.8 M6 19.5 A8.5 8.5 0 0 0 16 19.5" stroke="#fff" stroke-width="1.8" fill="none" stroke-linejoin="round" stroke-linecap="round"/><circle cx="11" cy="2.8" r="2" fill="#fff"/><circle cx="3.5" cy="17" r="2" fill="#fff"/><circle cx="18.5" cy="17" r="2" fill="#fff"/></svg>
<div class="t " style="left:63px;top:827px;font-size:17.5px;line-height:20px;color:#fff;font-weight:500">系统管理</div>
<div class="b" style="left:178px;top:64px;width:21px;height:794px;background:#f1f1f1;border-left:1px solid #fafafa"></div>
<svg class="b" style="left:183px;top:71px;" width="11" height="7" viewBox="0 0 11 7"><path d="M5.5 0.5 L10.5 6 H0.5 Z" fill="#505050"/></svg>
<div class="b" style="left:180px;top:175px;width:17px;height:531px;background:#c1c1c1"></div>
<svg class="b" style="left:183px;top:843px;" width="11" height="7" viewBox="0 0 11 7"><path d="M5.5 6.5 L10.5 1 H0.5 Z" fill="#505050"/></svg>
<div class="b" style="left:0px;top:858px;width:200px;height:44px;background:#41475a"></div>
<svg class="b" style="left:51px;top:872px;" width="26" height="17" viewBox="0 0 26 17"><path d="M1 8.5 L12.5 1 V16 Z" fill="#fff"/><rect x="15" y="5" width="3.5" height="7" fill="#fff"/><rect x="20.5" y="5" width="3.5" height="7" fill="#fff"/></svg>
<div class="t " style="left:77px;top:871px;font-size:18px;line-height:20px;color:#fff;font-weight:500">取消固定</div>
<div class="b" style="left:0px;top:0px;width:200px;height:64px;background:#414156"></div>
<svg class="b" style="left:21px;top:11px;" width="33" height="27" viewBox="0 0 33 27"><path d="M9.5 1.5 C3.5 4.5 0.5 9.5 1.5 14 C2.5 18.5 9 22.5 15.7 25.5 C11 21 9.3 16 9.3 11.5 C9.3 7 10.5 4.5 12.3 3 Z" fill="#e6e6e6"/><path d="M 23.5 1.5 C 29.5 4.5 32.5 9.5 31.5 14 C 30.5 18.5 24 22.5 17.3 25.5 C 22 21 23.7 16 23.7 11.5 C 23.7 7 22.5 4.5 20.7 3 Z" fill="#d2d2d2"/><circle cx="16.5" cy="11.1" r="4.7" fill="#dedede"/><circle cx="16.5" cy="10.8" r="0.9" fill="#666"/></svg>
<div class="t " style="left:59px;top:20px;font-size:17px;line-height:20px;color:#f4f4f4;font-weight:500;transform:scale(1,0.78);transform-origin:0 0">畅捷通好业财</div>
<div class="t " style="left:19px;top:41px;font-size:12px;line-height:20px;color:#fff;font-weight:bold">专业版</div>
<div class="b" style="left:0px;top:0px;width:1920px;height:1px;background:#d6d6d6"></div></body></html>
